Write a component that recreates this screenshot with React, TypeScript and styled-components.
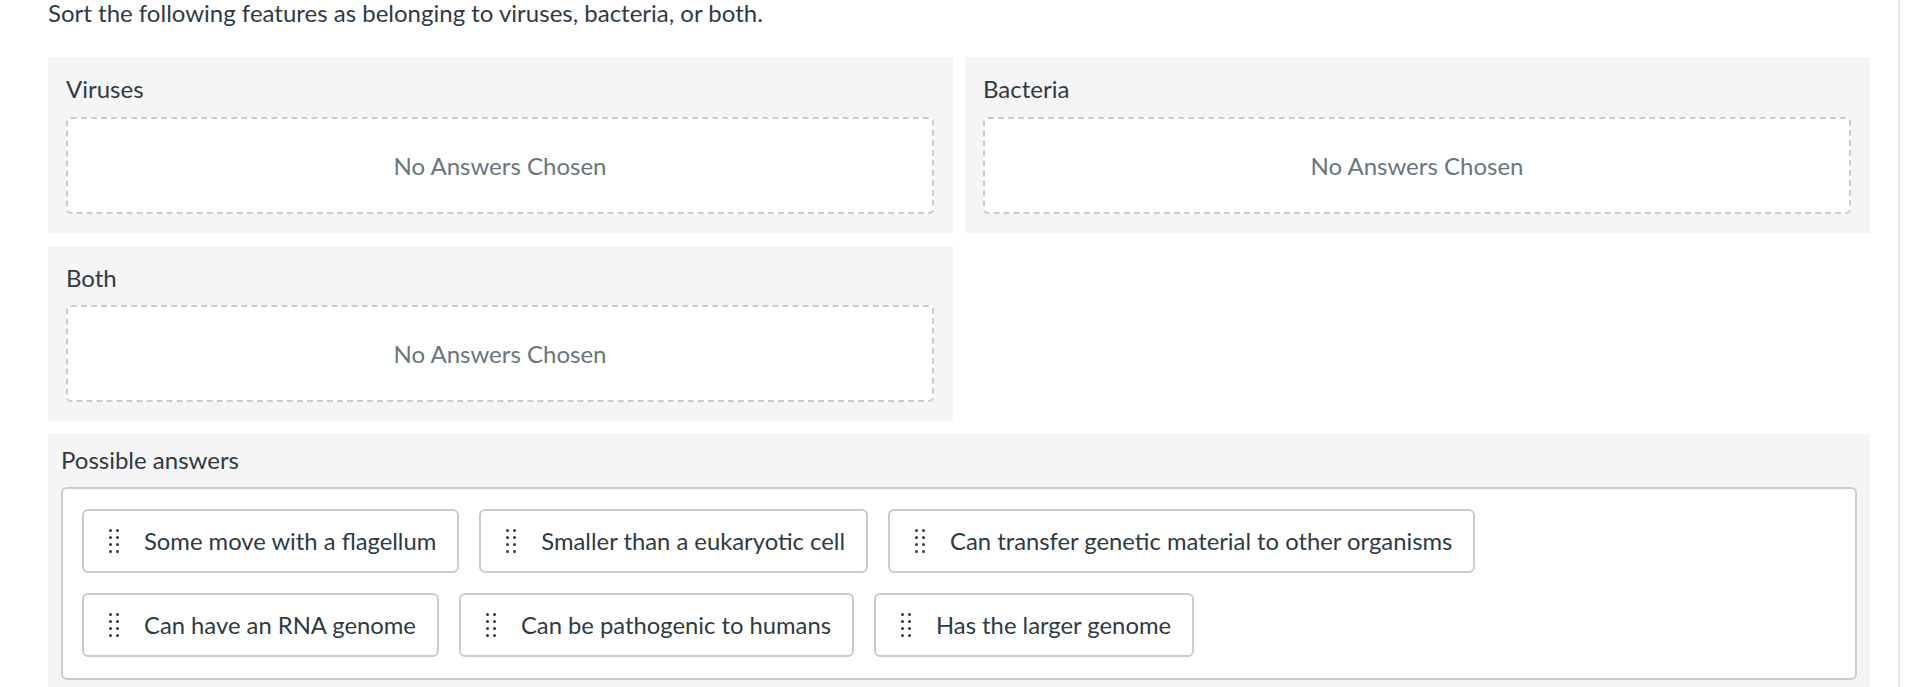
import React from "react";
import styled, { createGlobalStyle } from "styled-components";

const GlobalStyles = createGlobalStyle`
  html, body {
    margin: 0;
    padding: 0;
    background: #fff;
  }
  body {
    font-family: Lato, "Open Sans", sans-serif;
    color: #2d3b45;
  }
`;

const Page = styled.div`
  width: 1900px;
  min-height: 687px;
  border-right: 2px solid #e4e6e8;
  padding: 0 30px 0 48px;
  box-sizing: border-box;
`;

const Question = styled.p`
  margin: -1px 0 29px;
  font-size: 24px;
  line-height: 28.8px;
`;

const Grid = styled.div`
  display: grid;
  grid-template-columns: 905px 905px;
  column-gap: 12px;
  row-gap: 13px;
`;

const Category = styled.div`
  background: #f5f5f5;
  padding: 18px 19px 19px 18px;
`;

const CategoryLabel = styled.div`
  font-size: 24px;
  line-height: 1.2;
  margin-bottom: 13px;
`;

const DropZone = styled.div`
  height: 97px;
  box-sizing: border-box;
  border: 2px dashed #c7cdd1;
  border-radius: 5px;
  background: #fff;
  display: flex;
  align-items: center;
  justify-content: center;
  font-size: 24px;
  color: #68777d;
`;

const AnswersPanel = styled.div`
  grid-column: 1 / span 2;
  background: #f5f5f5;
  padding: 12px 13px 12px;
`;

const AnswersLabel = styled.div`
  font-size: 24px;
  line-height: 1.2;
  margin-bottom: 12px;
`;

const AnswerBank = styled.div`
  border: 2px solid #c7cdd1;
  border-radius: 6px;
  background: #fff;
  padding: 20px 19px 21px;
  display: flex;
  flex-direction: column;
  gap: 20px;
`;

const ChipRow = styled.div`
  display: flex;
  gap: 20px;
`;

const Chip = styled.div`
  height: 64px;
  box-sizing: border-box;
  border: 2px solid #c7cdd1;
  border-radius: 6px;
  background: #fff;
  display: flex;
  align-items: center;
  padding: 0 21px 0 25px;
  font-size: 23.8px;
  white-space: nowrap;
  cursor: grab;
`;

const Handle = styled.span`
  display: grid;
  grid-template-columns: 3px 3px;
  grid-auto-rows: 3px;
  column-gap: 4px;
  row-gap: 4px;
  margin-right: 25px;
  flex-shrink: 0;

  i {
    display: block;
    width: 3px;
    height: 3px;
    border-radius: 50%;
    background: #2d3b45;
  }
`;

const DragHandle = () => (
  <Handle aria-hidden="true">
    {Array.from({ length: 8 }).map((_, i) => (
      <i key={i} />
    ))}
  </Handle>
);

const categories = ["Viruses", "Bacteria", "Both"];

const rows = [
  ["Some move with a flagellum", "Smaller than a eukaryotic cell", "Can transfer genetic material to other organisms"],
  ["Can have an RNA genome", "Can be pathogenic to humans", "Has the larger genome"],
];

function App(): JSX.Element {
  return (
    <React.Fragment>
      <GlobalStyles />
      <Page>
        <Question>Sort the following features as belonging to viruses, bacteria, or both.</Question>
        <Grid>
          {categories.map((name) => (
            <Category key={name}>
              <CategoryLabel>{name}</CategoryLabel>
              <DropZone>No Answers Chosen</DropZone>
            </Category>
          ))}
          <AnswersPanel>
            <AnswersLabel>Possible answers</AnswersLabel>
            <AnswerBank>
              {rows.map((row, r) => (
                <ChipRow key={r}>
                  {row.map((text) => (
                    <Chip key={text}>
                      <DragHandle />
                      {text}
                    </Chip>
                  ))}
                </ChipRow>
              ))}
            </AnswerBank>
          </AnswersPanel>
        </Grid>
      </Page>
    </React.Fragment>
  );
}

export default App;
